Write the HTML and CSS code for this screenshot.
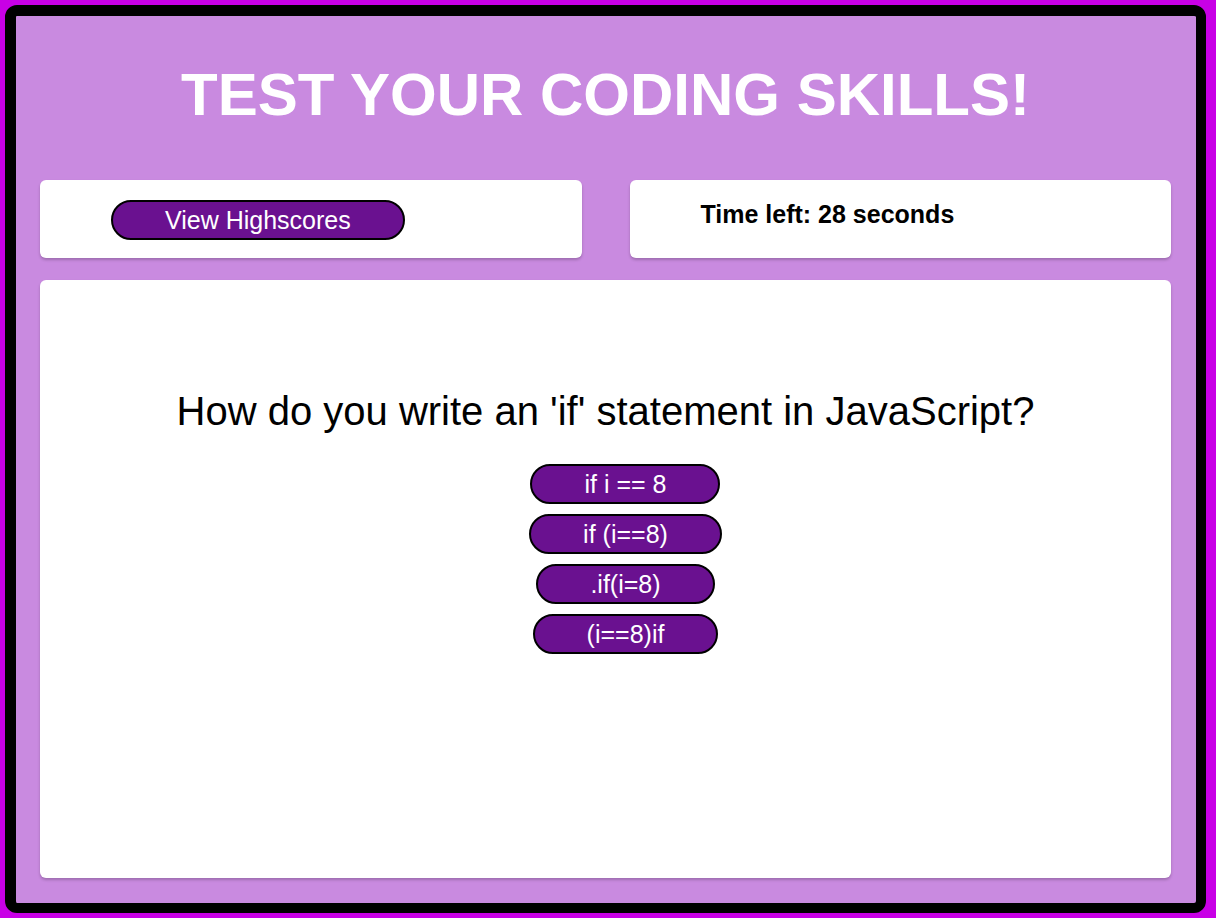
FILE: index.html
```html
<!DOCTYPE html>
<html lang="en">
<head>
<meta charset="utf-8">
<title>Coding Quiz</title>
<link rel="stylesheet" href="styles.css">
</head>
<body>
<div class="frame">
  <h1 class="title">TEST YOUR CODING SKILLS!</h1>
  <div class="top-row">
    <div class="card small-card">
      <button class="pill">View Highscores</button>
    </div>
    <div class="card small-card">
      <div class="timer">Time left: 28 seconds</div>
    </div>
  </div>
  <div class="card main-card">
    <p class="question">How do you write an 'if' statement in JavaScript?</p>
    <ul class="answers">
      <li><button class="pill">if i == 8</button></li>
      <li><button class="pill">if (i==8)</button></li>
      <li><button class="pill">.if(i=8)</button></li>
      <li><button class="pill">(i==8)if</button></li>
    </ul>
  </div>
</div>
</body>
</html>
```
FILE: styles.css
```css
html, body {
  margin: 0;
  padding: 0;
}
body {
  background: #c800e6;
  font-family: "Liberation Sans", Arial, sans-serif;
  height: 918px;
  overflow: hidden;
}
.frame {
  box-sizing: border-box;
  margin: 5px 10px 5px 5px;
  height: 908px;
  border: solid #000;
  border-width: 11px 10px 10px 11px;
  border-radius: 12px;
  background: #c98ae0;
  padding: 0 25px 25px 24px;
  display: flex;
  flex-direction: column;
}
.title {
  margin: 44px 0 51px;
  color: #fff;
  font-size: 60px;
  font-weight: bold;
  line-height: 69px;
  text-align: center;
}
.top-row {
  display: flex;
  gap: 48px;
  margin-bottom: 22px;
}
.card {
  background: #fff;
  border-radius: 6px;
  box-shadow: 0 2px 3px rgba(0, 0, 0, 0.22);
}
.small-card {
  flex: 1;
  box-sizing: border-box;
  height: 78px;
  padding: 20px 0 0 71px;
}
.pill {
  box-sizing: border-box;
  height: 40px;
  padding: 0 52px;
  border: 2px solid #000;
  border-radius: 20px;
  background: #6a1190;
  color: #fff;
  font-family: "Liberation Sans", Arial, sans-serif;
  font-size: 25px;
  line-height: 36px;
  cursor: pointer;
}
.timer {
  font-size: 25px;
  font-weight: bold;
  line-height: 29px;
  color: #000;
}
.main-card {
  flex: 1;
  padding-top: 108px;
  display: flex;
  flex-direction: column;
  align-items: center;
}
.question {
  margin: 0 0 30px;
  font-size: 40px;
  line-height: 46px;
  color: #000;
}
.answers {
  list-style: none;
  margin: 0;
  padding: 0 0 0 40px;
  display: flex;
  flex-direction: column;
  align-items: center;
  gap: 10px;
}
.answers li {
  display: block;
}
```
